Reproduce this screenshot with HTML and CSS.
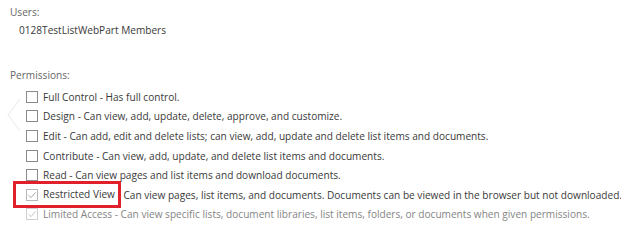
FILE: index.html
```html
<!DOCTYPE html>
<html lang="en">
<head>
    <meta charset="UTF-8">
    <title>Permissions</title>
    <link rel="stylesheet" href="styles.css">
</head>
<body>
    <div class="panel">
        <!-- Usuarios -->
        <div class="field-label">Users:</div>
        <div class="user-name">0128TestListWebPart Members</div>

        <!-- Permisos -->
        <div class="field-label perms-label">Permissions:</div>
        <ul class="perm-list">
            <li class="perm-row"><span class="check"></span>Full Control - Has full control.</li>
            <li class="perm-row"><span class="check"></span>Design - Can view, add, update, delete, approve, and customize.</li>
            <li class="perm-row"><span class="check"></span>Edit - Can add, edit and delete lists; can view, add, update and delete list items and documents.</li>
            <li class="perm-row"><span class="check"></span>Contribute - Can view, add, update, and delete list items and documents.</li>
            <li class="perm-row"><span class="check"></span>Read - Can view pages and list items and download documents.</li>
            <li class="perm-row"><span class="highlight"><span class="check checked"><svg width="10" height="10" viewBox="0 0 10 10"><path d="M1.5 5.2 L4 7.6 L8.6 2.4" fill="none" stroke="#a6a6a6" stroke-width="1"/></svg></span>Restricted View</span>&nbsp;- Can view pages, list items, and documents. Documents can be viewed in the browser but not downloaded.</li>
            <li class="perm-row disabled"><span class="check checked dim"><svg width="10" height="10" viewBox="0 0 10 10"><path d="M1.5 5.2 L4 7.6 L8.6 2.4" fill="none" stroke="#c4c4c4" stroke-width="1"/></svg></span>Limited Access - Can view specific lists, document libraries, list items, folders, or documents when given permissions.</li>
        </ul>

        <svg class="chevron" width="16" height="34" viewBox="0 0 16 34"><path d="M14 1 L2 17 L14 33" fill="none" stroke="#f2f2f2" stroke-width="1.5"/></svg>
    </div>
</body>
</html>
```

FILE: styles.css
```css
body {
    margin: 0;
    background: white;
    font-family: "Open Sans", "Noto Sans", sans-serif;
    font-size: 10.1px;
    color: #3a3a3a;
}

.panel {
    position: relative;
    padding: 4px 0 0 10px;
}

.field-label {
    color: #666;
    line-height: 16px;
}

.user-name {
    padding-left: 9px;
    line-height: 20px;
    color: #3a3a3a;
}

.perms-label {
    margin-top: 27px;
}

.perm-list {
    list-style: none;
    margin: 4px 0 0 0;
    padding: 0 0 0 16px;
}

.perm-row {
    display: flex;
    align-items: center;
    height: 19.6px;
    white-space: nowrap;
}

.check {
    display: inline-flex;
    align-items: center;
    justify-content: center;
    width: 10px;
    height: 10px;
    border: 1px solid #8a8a8a;
    margin-right: 5px;
    flex-shrink: 0;
}

.check.checked {
    border-color: #b5b5b5;
}

.check.dim {
    border-color: #d0d0d0;
}

.highlight {
    position: relative;
    display: inline-flex;
    align-items: center;
    line-height: 15px;
}

.highlight::after {
    content: "";
    position: absolute;
    left: -13px;
    right: -6px;
    top: -6px;
    bottom: -6px;
    border: 3px solid #e0202b;
}

.disabled {
    color: #858585;
}

.chevron {
    position: absolute;
    left: 6px;
    top: 98px;
}
```
